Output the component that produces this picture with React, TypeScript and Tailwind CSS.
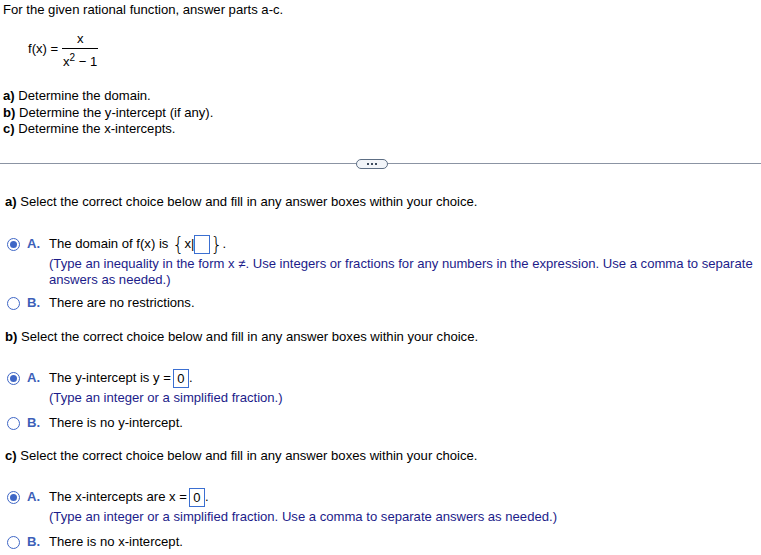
import React from "react";

function Radio({ checked }: { checked?: boolean }) {
  return (
    <span className="w-[13px] h-[13px] rounded-full border border-[#3f67c6] bg-white flex items-center justify-center shrink-0">
      {checked && <span className="w-[7px] h-[7px] rounded-full bg-[#3f67c6]" />}
    </span>
  );
}

function Box({ value }: { value?: string }) {
  return (
    <span className="inline-flex items-center justify-center min-w-[16px] h-[19px] border border-[#3b6fd1] px-[2px] align-middle text-[13px] leading-none">
      {value}
    </span>
  );
}

function Choice({
  letter,
  checked,
  children,
  hint,
}: {
  letter: string;
  checked?: boolean;
  children: React.ReactNode;
  hint?: React.ReactNode;
}) {
  return (
    <div className="flex items-start pl-[7px]">
      <div className="flex items-center gap-[7px] w-[42px] h-[19px] shrink-0">
        <Radio checked={checked} />
        <span className="font-bold text-[#3d5fb8]">{letter}.</span>
      </div>
      <div className="flex-1">
        <div className="h-[19px] flex items-center">{children}</div>
        {hint && <div className="text-[#1c1c8a] leading-[16px] mt-[2px] pr-[6px]">{hint}</div>}
      </div>
    </div>
  );
}

function Prompt({ letter }: { letter: string }) {
  return (
    <div className="pl-[5px]">
      <span className="font-bold">{letter})</span> Select the correct choice below and fill in any answer boxes within your choice.
    </div>
  );
}

export default function App() {
  return (
    <div className="w-[761px] h-[555px] bg-white text-black text-[13.1px] leading-[16px] font-['Liberation_Sans',Arial,sans-serif] overflow-hidden">
      <div className="pl-[3px] pt-[2px]">For the given rational function, answer parts a-c.</div>

      <div className="flex items-center pl-[28px] mt-[12px] h-[40px]">
        <span className="mt-[-2px]">f(x) =</span>
        <span className="flex flex-col items-center ml-[4px]">
          <span className="leading-[15px]">x</span>
          <span className="w-[36px] h-px bg-black mt-[2px]" />
          <span className="leading-[15px] mt-[5px]">
            x<sup className="text-[10px] -top-[5px]">2</sup> − 1
          </span>
        </span>
      </div>

      <div className="pl-[3px] mt-[18px] leading-[16.5px]">
        <div><span className="font-bold">a)</span> Determine the domain.</div>
        <div><span className="font-bold">b)</span> Determine the y-intercept (if any).</div>
        <div><span className="font-bold">c)</span> Determine the x-intercepts.</div>
      </div>

      <div className="flex items-center mt-[20px] h-[12px]">
        <div className="w-[356px] h-px bg-[#8b94a3]" />
        <div className="w-[32px] h-[10px] rounded-[5px] border border-[#5d6e84] bg-[#f2f5f9] flex items-center justify-center gap-[2px]">
          <span className="w-[2px] h-[2px] bg-[#3d4b5e]" />
          <span className="w-[2px] h-[2px] bg-[#3d4b5e]" />
          <span className="w-[2px] h-[2px] bg-[#3d4b5e]" />
        </div>
        <div className="flex-1 h-px bg-[#8b94a3]" />
      </div>

      <div className="mt-[24px]">
        <Prompt letter="a" />
      </div>

      <div className="mt-[25px]">
        <Choice
          letter="A"
          checked
          hint={
            <>
              (Type an inequality in the form x ≠. Use integers or fractions for any numbers in the expression. Use a comma to separate answers as needed.)
            </>
          }
        >
          <span>The domain of f(x) is</span>
          <span className="ml-[4px] text-[19px] leading-none font-['DejaVu_Sans',sans-serif] font-light">{"{"}</span>
          <span>x|</span>
          <Box />
          <span className="text-[19px] leading-none font-['DejaVu_Sans',sans-serif] font-light">{"}"}</span>
          <span>.</span>
        </Choice>
      </div>

      <div className="mt-[6px]">
        <Choice letter="B">There are no restrictions.</Choice>
      </div>

      <div className="mt-[16px]">
        <Prompt letter="b" />
      </div>

      <div className="mt-[24px]">
        <Choice letter="A" checked hint="(Type an integer or a simplified fraction.)">
          <span className="mr-[2px]">The y-intercept is y =</span>
          <Box value="0" />
          <span>.</span>
        </Choice>
      </div>

      <div className="mt-[8px]">
        <Choice letter="B">There is no y-intercept.</Choice>
      </div>

      <div className="mt-[15px]">
        <Prompt letter="c" />
      </div>

      <div className="mt-[24px]">
        <Choice
          letter="A"
          checked
          hint="(Type an integer or a simplified fraction. Use a comma to separate answers as needed.)"
        >
          <span className="mr-[2px]">The x-intercepts are x =</span>
          <Box value="0" />
          <span>.</span>
        </Choice>
      </div>

      <div className="mt-[8px]">
        <Choice letter="B">There is no x-intercept.</Choice>
      </div>
    </div>
  );
}
